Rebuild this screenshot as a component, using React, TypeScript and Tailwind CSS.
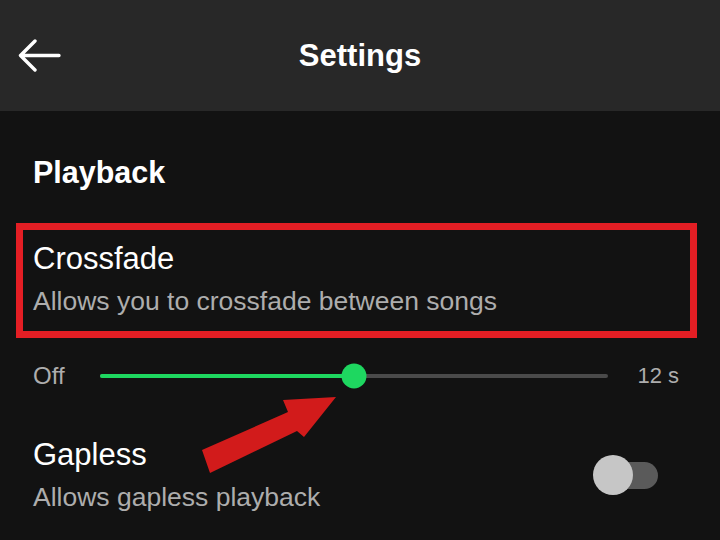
const Row = ({ title, desc }: { title: string; desc: string }) => (
  <div className="flex flex-col">
    <span className="text-[31px] leading-[36px] text-white">{title}</span>
    <span className="text-[26.5px] leading-[32px] text-[#adadad] mt-[8px]">{desc}</span>
  </div>
);

const App = () => (
  <div
    className="relative w-full h-[540px] overflow-hidden bg-[#121212] text-white"
    style={{ fontFamily: "'Liberation Sans', Arial, sans-serif" }}
  >
    <header className="h-[111px] bg-[#282828] flex items-center relative">
      <svg
        className="absolute left-[18px] top-[39px]"
        width="43"
        height="33"
        viewBox="0 0 43 33"
        fill="none"
        stroke="white"
        strokeWidth="3.4"
        strokeLinecap="round"
        strokeLinejoin="round"
      >
        <path d="M41 16.5H3M17 2L2.5 16.5L17 31" />
      </svg>
      <h1 className="w-full text-center text-[31px] font-bold leading-[31px]">Settings</h1>
    </header>

    <div className="pt-[43px]">
      <h2 className="px-[33px] text-[30.5px] font-bold leading-[36px]">Playback</h2>

      <div className="ml-[16px] mr-[23px] mt-[33px] h-[115px] border-[7px] border-[#e31e24] pl-[10px] pt-[11px]">
        <Row title="Crossfade" desc="Allows you to crossfade between songs" />
      </div>

      <div className="flex items-center pl-[33px] pr-[41px] mt-[24px] h-[28px]">
        <span className="w-[67px] text-[24px] leading-[28px] text-[#adadad]">Off</span>
        <div className="relative flex-1 h-[4px] rounded-full bg-[#4a4a4a]">
          <div className="absolute left-0 top-0 h-full w-[50%] rounded-full bg-[#1ed760]" />
          <div className="absolute left-[50%] top-1/2 -translate-x-1/2 -translate-y-1/2 w-[25px] h-[25px] rounded-full bg-[#1ed760]" />
        </div>
        <span className="w-[71px] text-right text-[22px] leading-[28px] text-[#adadad]">12 s</span>
      </div>

      <div className="flex items-center justify-between px-[33px] mt-[47px]">
        <Row title="Gapless" desc="Allows gapless playback" />
        <div className="relative w-[65px] h-[40px] mr-[29px] flex items-center">
          <div className="absolute left-[20px] right-0 h-[27px] rounded-full bg-[#5a5a5a]" />
          <div className="absolute left-0 w-[40px] h-[40px] rounded-full bg-[#c6c6c6]" />
        </div>
      </div>
    </div>

    <svg className="absolute left-0 top-0 pointer-events-none" width="720" height="540">
      <polygon
        points="202,450 288,412 283,400 336,397 304,437 297,431 210,473"
        fill="#d21b1b"
      />
    </svg>
  </div>
);

export default App;
